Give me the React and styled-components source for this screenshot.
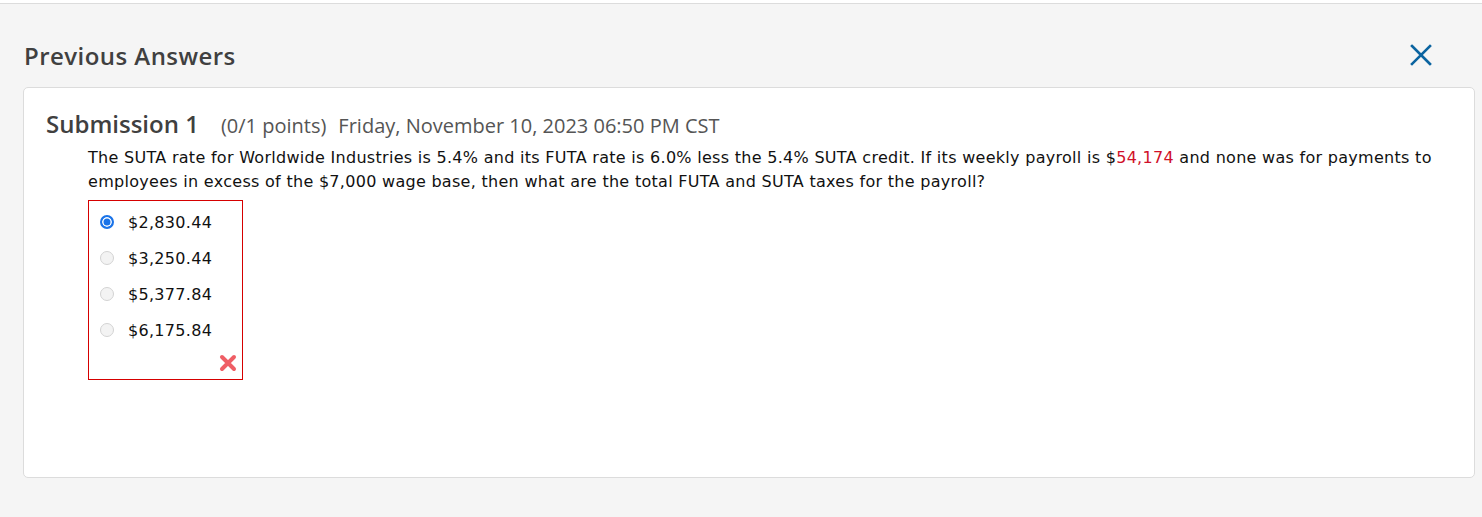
import styled, { createGlobalStyle } from "styled-components";

const GlobalStyle = createGlobalStyle`
  html, body {
    margin: 0;
    padding: 0;
    background: #f5f5f5;
  }
  body {
    font-family: "Open Sans", "Noto Sans", sans-serif;
    color: #333;
  }
`;

const answers = ["$2,830.44", "$3,250.44", "$5,377.84", "$6,175.84"];

function App() {
  return (
    <Page>
      <GlobalStyle />
      <TopRule />
      <Header>
        <Heading>Previous Answers</Heading>
        <CloseButton aria-label="Close">
          <svg width="22" height="22" viewBox="0 0 22 22">
            <path
              d="M2 2 L20 20 M20 2 L2 20"
              stroke="#0b64a0"
              strokeWidth="2.6"
              strokeLinecap="square"
            />
          </svg>
        </CloseButton>
      </Header>
      <Card>
        <SubmissionLine>
          <SubmissionTitle>Submission 1</SubmissionTitle>
          <Points>(0/1 points)</Points>
          <Stamp>Friday, November 10, 2023 06:50 PM CST</Stamp>
        </SubmissionLine>
        <Question>
          The SUTA rate for Worldwide Industries is 5.4% and its FUTA rate is
          6.0% less the 5.4% SUTA credit. If its weekly payroll is $
          <Var>54,174</Var> and none was for payments to employees in excess of
          the $7,000 wage base, then what are the total FUTA and SUTA taxes for
          the payroll?
        </Question>
        <AnswerBox>
          {answers.map((a, i) => (
            <Choice key={a}>
              <Radio $checked={i === 0} />
              <ChoiceText>{a}</ChoiceText>
            </Choice>
          ))}
          <Mark>
            <svg width="18" height="18" viewBox="0 0 18 18">
              <path
                d="M3 3 L15 15 M15 3 L3 15"
                stroke="#ee4d55"
                strokeWidth="4"
                strokeLinecap="round"
                opacity="0.9"
              />
            </svg>
          </Mark>
        </AnswerBox>
      </Card>
    </Page>
  );
}

const Page = styled.div`
  width: 1482px;
  height: 517px;
  background: #f5f5f5;
  overflow: hidden;
`;

const TopRule = styled.div`
  height: 3px;
  border-bottom: 1px solid #dcdcdc;
  background: #fff;
`;

const Header = styled.div`
  display: flex;
  align-items: center;
  justify-content: space-between;
  padding: 28px 50px 0 24px;
  height: 46px;
`;

const Heading = styled.h2`
  margin: 0;
  font-size: 24px;
  font-weight: 600;
  color: #404040;
  letter-spacing: 0.45px;
`;

const CloseButton = styled.button`
  border: 0;
  background: none;
  padding: 0;
  width: 22px;
  height: 22px;
  display: flex;
  cursor: pointer;
`;

const Card = styled.div`
  margin: 9px 7px 0 23px;
  height: 370px;
  background: #fff;
  border: 1px solid #dcdcdc;
  border-radius: 5px;
  padding: 19px 22px 0;
`;

const SubmissionLine = styled.div`
  display: flex;
  align-items: baseline;
  color: #404040;
`;

const SubmissionTitle = styled.span`
  font-size: 24px;
  font-weight: 600;
  margin-right: 22px;
`;

const Points = styled.span`
  font-size: 20px;
  color: #555;
  margin-right: 12px;
`;

const Stamp = styled.span`
  font-size: 20px;
  color: #555;
`;

const Question = styled.p`
  margin: 6px 0 0 42px;
  font-family: "DejaVu Sans", Verdana, sans-serif;
  font-size: 16px;
  line-height: 24px;
  color: #111;
  letter-spacing: 0.29px;
`;

const Var = styled.span`
  color: #d0102a;
`;

const AnswerBox = styled.div`
  margin: 6px 0 0 42px;
  width: 155px;
  height: 180px;
  border: 1px solid #d60000;
  box-sizing: border-box;
  padding: 3px 0 0 11px;
  display: flex;
  flex-direction: column;
  position: relative;
`;

const Choice = styled.label`
  display: flex;
  align-items: center;
  height: 36px;
`;

const Radio = styled.span`
  width: 14px;
  height: 14px;
  border-radius: 50%;
  box-sizing: border-box;
  margin-right: 14px;
  border: ${(p) => (p.$checked ? "2px solid #1a73e8" : "1px solid #d3d3d3")};
  background: ${(p) => (p.$checked ? "#1a73e8" : "#f3f3f3")};
  box-shadow: ${(p) => (p.$checked ? "inset 0 0 0 1.5px #fff" : "none")};
`;

const ChoiceText = styled.span`
  font-family: "DejaVu Sans", Verdana, sans-serif;
  font-size: 16px;
  letter-spacing: 0.3px;
  color: #111;
`;

const Mark = styled.div`
  position: absolute;
  right: 5px;
  bottom: 7px;
  width: 18px;
  height: 18px;
`;

export default App;
